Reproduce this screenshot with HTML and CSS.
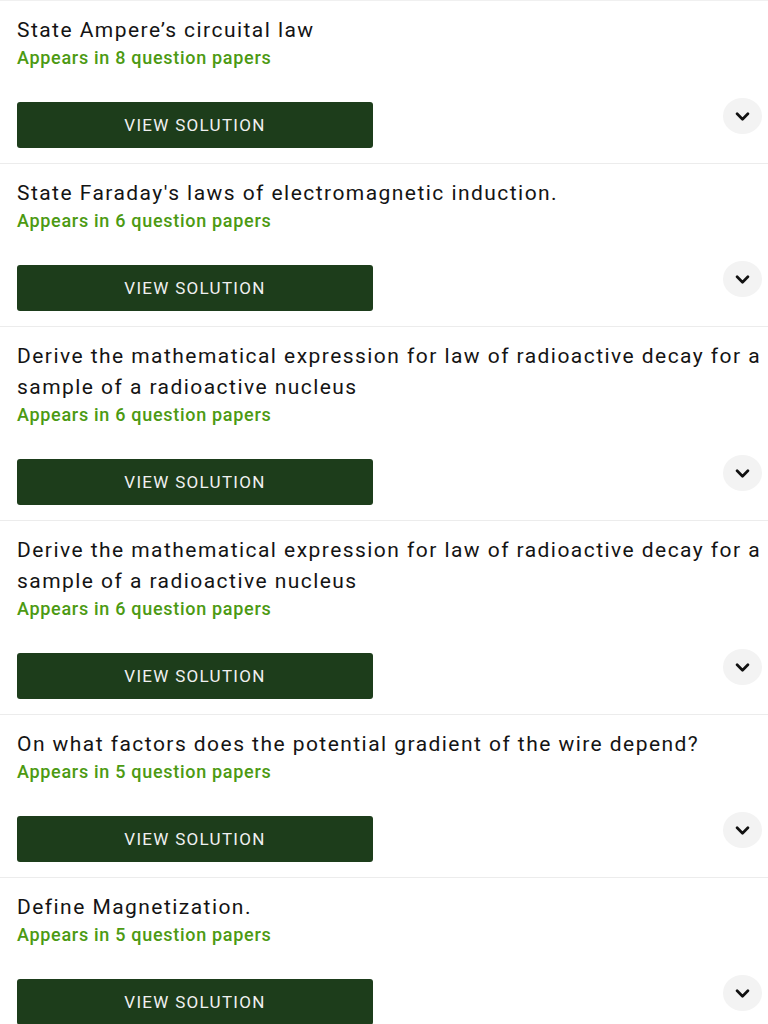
FILE: index.html
```html
<!DOCTYPE html>
<html lang="en">
<head>
<meta charset="utf-8">
<link rel="stylesheet" href="styles.css">
</head>
<body>
<div class="list">
  <div class="item">
    <div class="title">State Ampere’s circuital law</div>
    <div class="meta">Appears in 8 question papers</div>
    <div class="row">
      <button class="btn">VIEW SOLUTION</button>
      <span class="toggle"><svg viewBox="0 0 16 10" width="15" height="9"><path d="M2 2 L8 8 L14 2" fill="none" stroke="#111" stroke-width="3" stroke-linecap="round" stroke-linejoin="round"/></svg></span>
    </div>
  </div>
  <div class="item">
    <div class="title">State Faraday's laws of electromagnetic induction.</div>
    <div class="meta">Appears in 6 question papers</div>
    <div class="row">
      <button class="btn">VIEW SOLUTION</button>
      <span class="toggle"><svg viewBox="0 0 16 10" width="15" height="9"><path d="M2 2 L8 8 L14 2" fill="none" stroke="#111" stroke-width="3" stroke-linecap="round" stroke-linejoin="round"/></svg></span>
    </div>
  </div>
  <div class="item">
    <div class="title">Derive the mathematical expression for law of radioactive decay for a sample of a radioactive nucleus</div>
    <div class="meta">Appears in 6 question papers</div>
    <div class="row">
      <button class="btn">VIEW SOLUTION</button>
      <span class="toggle"><svg viewBox="0 0 16 10" width="15" height="9"><path d="M2 2 L8 8 L14 2" fill="none" stroke="#111" stroke-width="3" stroke-linecap="round" stroke-linejoin="round"/></svg></span>
    </div>
  </div>
  <div class="item">
    <div class="title">Derive the mathematical expression for law of radioactive decay for a sample of a radioactive nucleus</div>
    <div class="meta">Appears in 6 question papers</div>
    <div class="row">
      <button class="btn">VIEW SOLUTION</button>
      <span class="toggle"><svg viewBox="0 0 16 10" width="15" height="9"><path d="M2 2 L8 8 L14 2" fill="none" stroke="#111" stroke-width="3" stroke-linecap="round" stroke-linejoin="round"/></svg></span>
    </div>
  </div>
  <div class="item">
    <div class="title">On what factors does the potential gradient of the wire depend?</div>
    <div class="meta">Appears in 5 question papers</div>
    <div class="row">
      <button class="btn">VIEW SOLUTION</button>
      <span class="toggle"><svg viewBox="0 0 16 10" width="15" height="9"><path d="M2 2 L8 8 L14 2" fill="none" stroke="#111" stroke-width="3" stroke-linecap="round" stroke-linejoin="round"/></svg></span>
    </div>
  </div>
  <div class="item">
    <div class="title">Define Magnetization.</div>
    <div class="meta">Appears in 5 question papers</div>
    <div class="row">
      <button class="btn">VIEW SOLUTION</button>
      <span class="toggle"><svg viewBox="0 0 16 10" width="15" height="9"><path d="M2 2 L8 8 L14 2" fill="none" stroke="#111" stroke-width="3" stroke-linecap="round" stroke-linejoin="round"/></svg></span>
    </div>
  </div>
</div>
</body>
</html>
```
FILE: styles.css
```css
html, body {
  margin: 0;
  padding: 0;
  background: #ffffff;
}
body {
  font-family: Roboto, "Liberation Sans", Arial, sans-serif;
  color: #111;
}
.list {
  display: flex;
  flex-direction: column;
  border-top: 1px solid #f0f0f0;
}
.item {
  display: flex;
  flex-direction: column;
  padding: 14px 6px 15px 17px;
  border-bottom: 1px solid #ececec;
}
.title {
  font-size: 21px;
  line-height: 31px;
  letter-spacing: 1.45px;
  color: #141414;
  margin-right: -6px;
}
.meta {
  font-size: 18px;
  line-height: 24px;
  font-weight: 500;
  letter-spacing: 0.7px;
  color: #4c9a12;
}
.row {
  display: flex;
  align-items: flex-start;
  justify-content: space-between;
  margin-top: 28px;
}
.btn {
  margin-top: 4px;
  width: 356px;
  height: 46px;
  border: none;
  border-radius: 3px;
  background: #1d3d1b;
  color: #f0f0f0;
  font-family: Roboto, "Liberation Sans", Arial, sans-serif;
  font-size: 17px;
  font-weight: 400;
  letter-spacing: 1.3px;
  padding: 0;
  text-align: center;
}
.toggle {
  width: 39px;
  height: 36px;
  border-radius: 50%;
  background: #f3f3f3;
  display: flex;
  align-items: center;
  justify-content: center;
}
```
